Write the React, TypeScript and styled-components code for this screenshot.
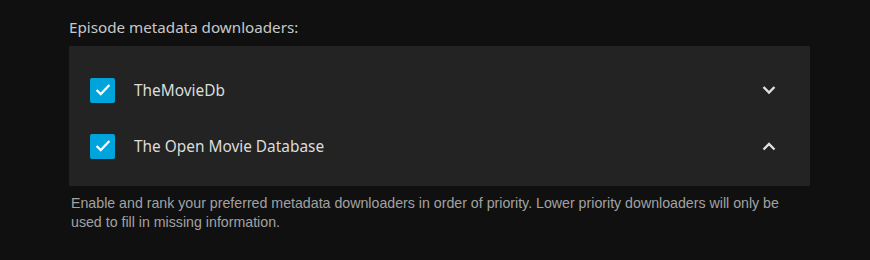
import React from 'react';
import styled, { createGlobalStyle } from 'styled-components';

const Global = createGlobalStyle`
  html, body {
    margin: 0;
    background: #101010;
  }
`;

const Page = styled.div`
  width: 870px;
  height: 260px;
  padding: 17px 60px 0 69px;
  box-sizing: border-box;
  background: #101010;
  font-family: 'Noto Sans', 'Open Sans', sans-serif;
`;

const Heading = styled.h3`
  margin: 0 0 8px;
  height: 21px;
  font-size: 15.2px;
  font-weight: 400;
  color: #c8c8c8;
  line-height: 21px;
`;

const Panel = styled.div`
  width: 741px;
  background: #232323;
  padding: 16px 0 12px;
  display: flex;
  flex-direction: column;
`;

const Row = styled.div`
  height: 56px;
  display: flex;
  align-items: center;
  padding: 0 33px 0 21px;
`;

const Box = styled.span`
  width: 25px;
  height: 25px;
  border-radius: 2px;
  background: #00a4dc;
  display: flex;
  align-items: center;
  justify-content: center;
  flex-shrink: 0;
`;

const Label = styled.span`
  margin-left: 19px;
  flex: 1;
  font-size: 15.4px;
  color: #dcdcdc;
`;

const Toggle = styled.span`
  width: 16px;
  height: 16px;
  display: flex;
  align-items: center;
  justify-content: center;
  color: #e0e0e0;
`;

const Hint = styled.p`
  margin: 8px 0 0 2px;
  width: 730px;
  font-family: 'Liberation Sans Narrow', 'Liberation Sans', sans-serif;
  font-size: 14.2px;
  line-height: 19px;
  color: #a2a2a2;
`;

const Check = () => (
  <svg width="18" height="18" viewBox="0 0 24 24" fill="none" stroke="#fff" strokeWidth="3" strokeLinecap="square">
    <path d="M4.5 13l4.5 4.5L19.5 6.5" />
  </svg>
);

const Chevron = ({ up }: { up?: boolean }) => (
  <svg width="16" height="16" viewBox="0 0 16 16" fill="none" stroke="currentColor" strokeWidth="2.4">
    <path d={up ? 'M2.5 11.5L8 6l5.5 5.5' : 'M2.5 5L8 10.5 13.5 5'} />
  </svg>
);

const items = [
  { name: 'TheMovieDb', open: false },
  { name: 'The Open Movie Database', open: true },
];

export default function App() {
  return (
    <>
      <Global />
      <Page>
        <Heading>Episode metadata downloaders:</Heading>
        <Panel>
          {items.map((it) => (
            <Row key={it.name}>
              <Box>
                <Check />
              </Box>
              <Label>{it.name}</Label>
              <Toggle>
                <Chevron up={it.open} />
              </Toggle>
            </Row>
          ))}
        </Panel>
        <Hint>
          Enable and rank your preferred metadata downloaders in order of priority. Lower priority downloaders will only be
          used to fill in missing information.
        </Hint>
      </Page>
    </>
  );
}
